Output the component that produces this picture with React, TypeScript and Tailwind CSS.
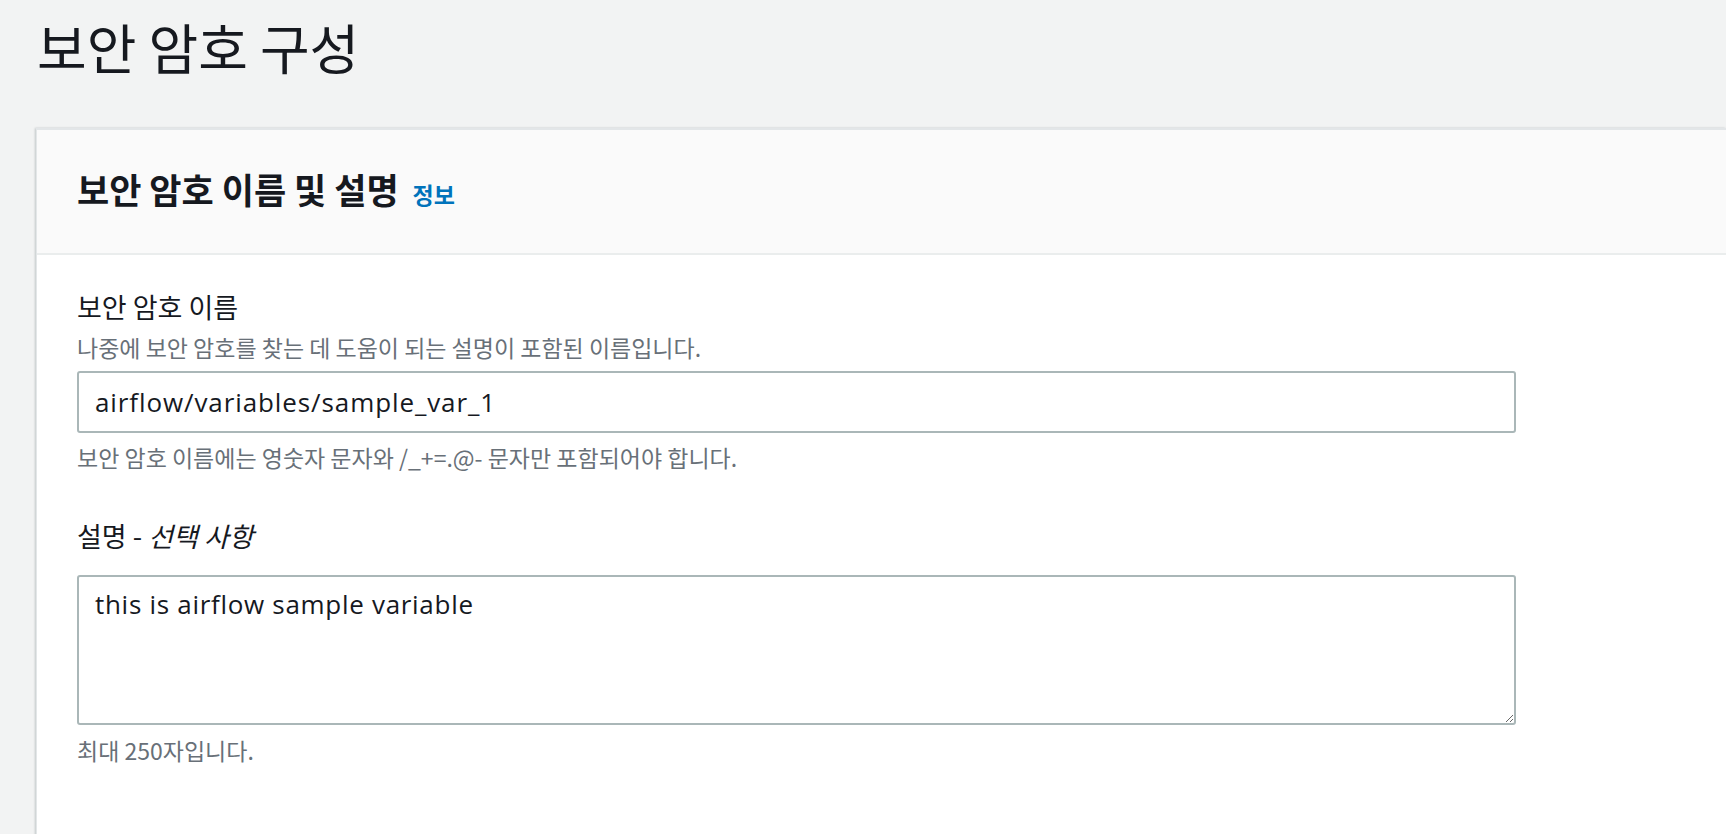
const ko = "font-['Noto_Sans_CJK_KR',sans-serif]";

function Field({ children }: { children: React.ReactNode }) {
  return <div className="flex flex-col">{children}</div>;
}

export default function App() {
  return (
    <div className={`min-h-[834px] bg-[#f2f3f3] text-[#16191f] ${ko}`}>
      <div className="pl-[37px] pt-[18px]">
        <h1 className="text-[54px] leading-[58px] font-normal">보안 암호 구성</h1>
      </div>

      <div className="ml-[36px] mt-[52px] bg-white border-t-2 border-l border-[#e3e6e8] shadow-[-1px_0_2px_rgba(0,28,36,0.2)]">
        <div className="bg-[#fafafa] border-b-2 border-[#eaeded] pl-[40px] pt-[39px] pb-[44px]">
          <div className="flex items-baseline h-[40px]">
            <h2 className="text-[35px] leading-[40px] font-bold">보안 암호 이름 및 설명</h2>
            <a className="ml-[14px] text-[23px] leading-[28px] font-bold text-[#0073bb]">정보</a>
          </div>
        </div>

        <div className="pl-[40px] pt-[36px] pb-[80px]">
          <Field>
            <label className="text-[27px] leading-[32px]">보안 암호 이름</label>
            <p className="mt-[10px] text-[23px] leading-[28px] text-[#687078]">
              나중에 보안 암호를 찾는 데 도움이 되는 설명이 포함된 이름입니다.
            </p>
            <input
              readOnly
              defaultValue="airflow/variables/sample_var_1"
              className="mt-[10px] w-[1439px] h-[62px] px-[16px] border-2 border-[#aab7b8] rounded-[3px] bg-white text-[26px] tracking-[0.9px] text-[#16191f] font-['Open_Sans',sans-serif] outline-none"
            />
            <p className="mt-[10px] text-[23px] leading-[28px] text-[#687078]">
              보안 암호 이름에는 영숫자 문자와 /_+=.@- 문자만 포함되어야 합니다.
            </p>
          </Field>

          <div className="mt-[49px]">
            <Field>
              <label className="text-[27px] leading-[32px]">
                설명 - <i>선택 사항</i>
              </label>
              <textarea
                readOnly
                defaultValue="this is airflow sample variable"
                className="mt-[23px] w-[1439px] h-[150px] px-[16px] pt-[10px] border-2 border-[#aab7b8] rounded-[3px] bg-white text-[26px] leading-[34px] tracking-[0.7px] text-[#16191f] font-['Open_Sans',sans-serif] outline-none"
              />
              <p className="mt-[11px] text-[23px] leading-[28px] text-[#687078]">최대 250자입니다.</p>
            </Field>
          </div>
        </div>
      </div>
    </div>
  );
}
